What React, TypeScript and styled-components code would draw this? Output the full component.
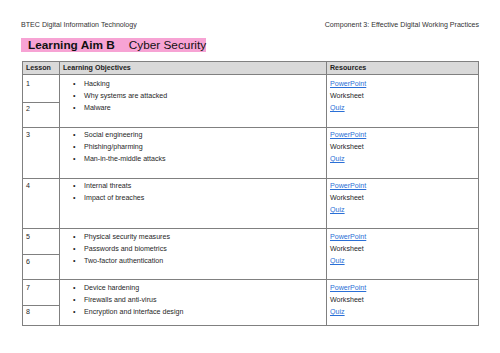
import React from 'react'
import styled, { createGlobalStyle } from 'styled-components'

const GlobalStyle = createGlobalStyle`
  body {
    margin: 0;
    background: #ffffff;
    font-family: "Liberation Sans", Arial, sans-serif;
    color: #1f1f1f;
  }
`

const Page = styled.div`
  width: 500px;
  height: 353px;
  padding: 21px 21px 0 21px;
  box-sizing: border-box;
`

const TopBar = styled.div`
  display: flex;
  justify-content: space-between;
  font-size: 7.1px;
  line-height: 9px;
  color: #333;
`

const Banner = styled.div`
  display: inline-flex;
  align-items: center;
  margin-top: 8px;
  height: 14px;
  padding-left: 7px;
  background: #f7a3d4;
  font-size: 11.8px;
  color: #111;
`

const AimLabel = styled.span`
  font-weight: bold;
  margin-right: 14px;
`

const Table = styled.div`
  margin-top: 8px;
  margin-left: 1px;
  width: 457px;
  border: 1px solid #808080;
  box-sizing: border-box;
  font-size: 7.1px;
`

const Row = styled.div<{ h: number; head?: boolean }>`
  display: grid;
  grid-template-columns: 36px 267px 1fr;
  height: ${p => p.h}px;
  box-sizing: border-box;
  background: ${p => (p.head ? '#d9d9d9' : '#fff')};
  border-top: ${p => (p.head ? 'none' : '1px solid #808080')};
`

const Cell = styled.div<{ pad?: number; first?: boolean }>`
  box-sizing: border-box;
  padding: ${p => p.pad ?? 0}px 3px 0 3px;
  border-left: ${p => (p.first ? 'none' : '1px solid #808080')};
  line-height: 12px;
`

const HeadCell = styled(Cell)`
  font-weight: bold;
  color: #222;
  line-height: 12px;
  padding-top: 0;
`

const LessonCol = styled.div`
  display: flex;
  flex-direction: column;
`

const LessonBox = styled.div<{ h?: number; pad: number }>`
  box-sizing: border-box;
  height: ${p => (p.h ? `${p.h}px` : 'auto')};
  flex: ${p => (p.h ? 'none' : '1')};
  padding: ${p => p.pad}px 3px 0 3px;
  line-height: 12px;
  & + & {
    border-top: 1px solid #808080;
  }
`

const Bullets = styled.ul`
  list-style: none;
  margin: 0;
  padding: 0 0 0 21px;
`

const Bullet = styled.li`
  position: relative;
  &::before {
    content: '•';
    position: absolute;
    left: -11px;
  }
`

const ResLink = styled.a`
  display: block;
  color: #2a6fd6;
  text-decoration: underline;
  width: fit-content;
`

const ResText = styled.div``

interface Group {
  h: number
  pad: number
  lessons: { n: string; h?: number; pad: number }[]
  items: string[]
}

const groups: Group[] = [
  { h: 53, pad: 3, lessons: [{ n: '1', h: 27, pad: 3 }, { n: '2', pad: 0 }], items: ['Hacking', 'Why systems are attacked', 'Malware'] },
  { h: 51, pad: 1, lessons: [{ n: '3', pad: 1 }], items: ['Social engineering', 'Phishing/pharming', 'Man-in-the-middle attacks'] },
  { h: 50, pad: 1, lessons: [{ n: '4', pad: 1 }], items: ['Internal threats', 'Impact of breaches'] },
  { h: 51, pad: 2, lessons: [{ n: '5', h: 25, pad: 2 }, { n: '6', pad: 1 }], items: ['Physical security measures', 'Passwords and biometrics', 'Two-factor authentication'] },
  { h: 46, pad: 2, lessons: [{ n: '7', h: 25, pad: 2 }, { n: '8', pad: 0 }], items: ['Device hardening', 'Firewalls and anti-virus', 'Encryption and interface design'] },
]

export default function App() {
  return (
    <Page>
      <GlobalStyle />
      <TopBar>
        <span>BTEC Digital Information Technology</span>
        <span>Component 3: Effective Digital Working Practices</span>
      </TopBar>
      <Banner>
        <AimLabel>Learning Aim B</AimLabel>
        <span>Cyber Security</span>
      </Banner>
      <Table>
        <Row h={12} head>
          <HeadCell first>Lesson</HeadCell>
          <HeadCell>Learning Objectives</HeadCell>
          <HeadCell>Resources</HeadCell>
        </Row>
        {groups.map((g, i) => (
          <Row key={i} h={g.h}>
            <LessonCol>
              {g.lessons.map(l => (
                <LessonBox key={l.n} h={l.h} pad={l.pad}>{l.n}</LessonBox>
              ))}
            </LessonCol>
            <Cell pad={g.pad}>
              <Bullets>
                {g.items.map(t => (
                  <Bullet key={t}>{t}</Bullet>
                ))}
              </Bullets>
            </Cell>
            <Cell pad={g.pad}>
              <ResLink href="#">PowerPoint</ResLink>
              <ResText>Worksheet</ResText>
              <ResLink href="#">Quiz</ResLink>
            </Cell>
          </Row>
        ))}
      </Table>
    </Page>
  )
}
